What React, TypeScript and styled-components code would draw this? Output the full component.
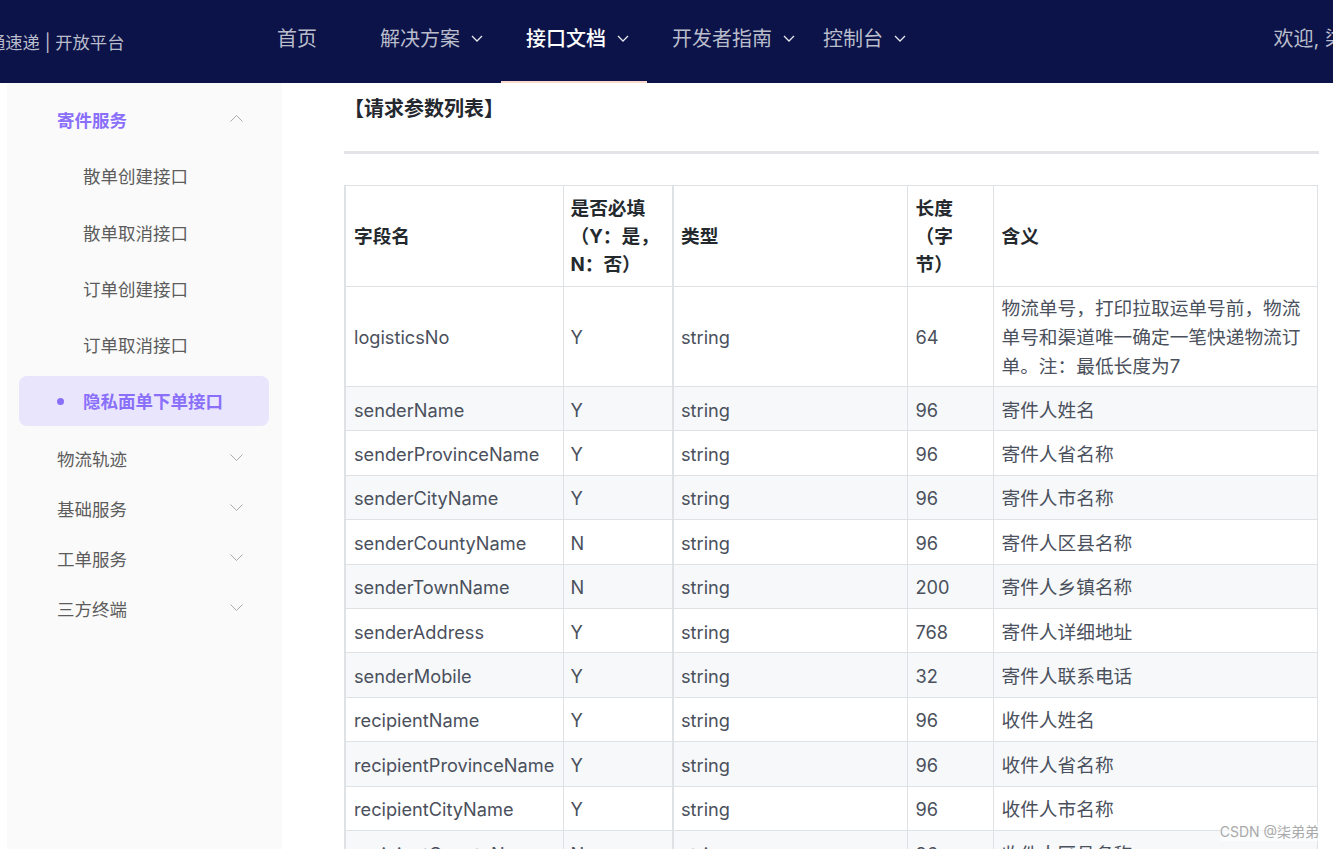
import React from 'react';
import styled, { createGlobalStyle } from 'styled-components';

const GlobalStyle = createGlobalStyle`
  html, body {
    margin: 0;
    padding: 0;
    background: #fff;
    font-family: Inter, "Noto Sans CJK SC", sans-serif;
  }
`;

const Page = styled.div`
  position: relative;
  height: 100vh;
  overflow: hidden;
  display: flex;
  flex-direction: column;
`;

const Header = styled.header`
  flex: none;
  height: 83px;
  display: flex;
  background: #0c1348;
  overflow: hidden;
`;

const Logo = styled.div`
  flex: none;
  width: 252px;
  padding-top: 32px;
  margin-left: -12px;
  margin-right: 12px;
  box-sizing: border-box;
  font-size: 17.3px;
  line-height: 22px;
  color: #b9bcca;
  white-space: nowrap;
`;

const TopNav = styled.nav`
  display: flex;
`;

const TopItem = styled.a<{ $active?: boolean; $right: number }>`
  display: flex;
  align-items: flex-start;
  padding: 25px ${p => p.$right}px 0 25px;
  box-sizing: border-box;
  font-size: 20px;
  line-height: 28px;
  color: ${p => (p.$active ? '#fff' : '#b9bdcb')};
  font-weight: ${p => (p.$active ? 500 : 400)};
  border-bottom: 2px solid ${p => (p.$active ? '#fbd9cc' : 'transparent')};
  white-space: nowrap;
`;

const TopChevron = styled.svg`
  width: 12px;
  height: 7px;
  margin: 10px 0 0 11px;
  fill: none;
  stroke: #e6e8f0;
  stroke-width: 1.3;
`;

const Welcome = styled.div`
  margin-left: auto;
  margin-right: -52px;
  padding-top: 25px;
  font-size: 20px;
  line-height: 28px;
  color: #b9bdcb;
  white-space: nowrap;
`;

const Body = styled.div`
  flex: 1;
  min-height: 0;
  display: flex;
  padding-left: 7px;
`;

const Sidebar = styled.aside`
  flex: none;
  width: 275px;
  box-sizing: border-box;
  padding: 12px 13px 0 12px;
  background: #fafafa;
`;

const GroupRow = styled.div<{ $open?: boolean }>`
  height: 50px;
  box-sizing: border-box;
  display: flex;
  align-items: center;
  justify-content: space-between;
  padding: 0 26px 2px 38px;
  font-size: 17.5px;
  font-weight: ${p => (p.$open ? 700 : 400)};
  color: ${p => (p.$open ? '#8a6ffb' : '#5c5c5c')};
`;

const SideChevron = styled.svg`
  width: 13px;
  height: 7px;
  margin-bottom: 2px;
  fill: none;
  stroke: #aaa;
  stroke-width: 1;
`;

const SubList = styled.div`
  padding-top: 3px;
  margin-bottom: 8px;
`;

const SubItem = styled.div`
  height: 56px;
  box-sizing: border-box;
  display: flex;
  align-items: center;
  padding-left: 64px;
  font-size: 17.5px;
  color: #5c5c5c;

  &:first-child {
    padding-bottom: 2px;
  }
`;

const ActiveItem = styled.div`
  height: 50px;
  box-sizing: border-box;
  margin-top: 4px;
  display: flex;
  align-items: center;
  padding: 0 0 2px 38px;
  border-radius: 8px;
  background: #e9e5fc;
  font-size: 17.5px;
  font-weight: 700;
  color: #8a6ffb;
`;

const Dot = styled.span`
  width: 7px;
  height: 7px;
  margin: 2px 19px 0 0;
  border-radius: 50%;
  background: #8a6ffb;
`;

const Main = styled.main`
  flex: 1;
  min-width: 0;
  padding: 12px 14px 0 62px;
`;

const Title = styled.h2`
  margin: 0 0 31px;
  padding-bottom: 28px;
  border-bottom: 3px solid #e3e4e8;
  font-size: 20px;
  line-height: 28px;
  font-weight: 700;
  color: #24272e;
`;

const Table = styled.table`
  width: 974px;
  table-layout: fixed;
  border-collapse: collapse;
  font-size: 18.2px;
  color: #4a505c;

  th, td {
    padding: 1px 8px 0;
    border: 1px solid #dfe2e5;
    text-align: left;
    vertical-align: middle;
  }

  th:nth-child(2), td:nth-child(2), th:nth-child(3), td:nth-child(3) {
    padding-left: 7px;
  }

  th {
    font-size: 18.7px;
    font-weight: 700;
    line-height: 28px;
    color: #24292e;
  }

  td {
    line-height: 29px;
  }

  tbody tr + tr td {
    padding-top: 3px;
  }

  td:last-child {
    font-size: 18.7px;
  }

  th:first-child, td:first-child, th:nth-child(3), td:nth-child(3) {
    border-left-width: 2px;
  }
`;

const Row = styled.tr<{ $height: number }>`
  height: ${p => p.$height}px;

  &:nth-child(2n) td {
    background: #f6f8fa;
  }
`;

const Watermark = styled.div`
  position: absolute;
  right: 14px;
  bottom: 8px;
  font-size: 14px;
  line-height: 18px;
  color: #aaa;
  background: rgba(255, 255, 255, 0.55);
`;

const ChevronDown = () => (
  <TopChevron viewBox="0 0 12 7">
    <path d="M1 1l5 5 5-5" />
  </TopChevron>
);

const SideDown = () => (
  <SideChevron viewBox="0 0 13 7">
    <path d="M.5.5l6 6 6-6" />
  </SideChevron>
);

const SideUp = () => (
  <SideChevron viewBox="0 0 13 7">
    <path d="M.5 6.5l6-6 6 6" />
  </SideChevron>
);

const subItems = ['散单创建接口', '散单取消接口', '订单创建接口', '订单取消接口'];
const groups = ['物流轨迹', '基础服务', '工单服务', '三方终端'];

const rows = [
  ['senderName', 'Y', 'string', '96', '寄件人姓名'],
  ['senderProvinceName', 'Y', 'string', '96', '寄件人省名称'],
  ['senderCityName', 'Y', 'string', '96', '寄件人市名称'],
  ['senderCountyName', 'N', 'string', '96', '寄件人区县名称'],
  ['senderTownName', 'N', 'string', '200', '寄件人乡镇名称'],
  ['senderAddress', 'Y', 'string', '768', '寄件人详细地址'],
  ['senderMobile', 'Y', 'string', '32', '寄件人联系电话'],
  ['recipientName', 'Y', 'string', '96', '收件人姓名'],
  ['recipientProvinceName', 'Y', 'string', '96', '收件人省名称'],
  ['recipientCityName', 'Y', 'string', '96', '收件人市名称'],
  ['recipientCountyName', 'N', 'string', '96', '收件人区县名称'],
];

const App = () => {
  return (
    <Page>
      <GlobalStyle />
      <Header>
        <Logo>通速递 | 开放平台</Logo>
        <TopNav>
          <TopItem $right={38}>首页</TopItem>
          <TopItem $right={18}>解决方案<ChevronDown /></TopItem>
          <TopItem $right={18} $active>接口文档<ChevronDown /></TopItem>
          <TopItem $right={3}>开发者指南<ChevronDown /></TopItem>
          <TopItem $right={3}>控制台<ChevronDown /></TopItem>
        </TopNav>
        <Welcome>欢迎, 柒弟弟</Welcome>
      </Header>
      <Body>
        <Sidebar>
          <GroupRow $open>寄件服务<SideUp /></GroupRow>
          <SubList>
            {subItems.map(item => (
              <SubItem key={item}>{item}</SubItem>
            ))}
            <ActiveItem><Dot />隐私面单下单接口</ActiveItem>
          </SubList>
          {groups.map(group => (
            <GroupRow key={group}>{group}<SideDown /></GroupRow>
          ))}
        </Sidebar>
        <Main>
          <Title>【请求参数列表】</Title>
          <Table>
            <colgroup>
              <col style={{ width: 218 }} />
              <col style={{ width: 110 }} />
              <col style={{ width: 234 }} />
              <col style={{ width: 86 }} />
              <col />
            </colgroup>
            <thead>
              <Row $height={101}>
                <th>字段名</th>
                <th>是否必填（Y：是，N：否）</th>
                <th>类型</th>
                <th>长度<br />（字<br />节）</th>
                <th>含义</th>
              </Row>
            </thead>
            <tbody>
              <Row $height={100}>
                <td>logisticsNo</td>
                <td>Y</td>
                <td>string</td>
                <td>64</td>
                <td>物流单号，打印拉取运单号前，物流单号和渠道唯一确定一笔快递物流订单。注：最低长度为7</td>
              </Row>
              {rows.map(row => (
                <Row key={row[0]} $height={44.4}>
                  {row.map((cell, i) => (
                    <td key={i}>{cell}</td>
                  ))}
                </Row>
              ))}
            </tbody>
          </Table>
        </Main>
      </Body>
      <Watermark>CSDN @柒弟弟</Watermark>
    </Page>
  );
};

export default App;
